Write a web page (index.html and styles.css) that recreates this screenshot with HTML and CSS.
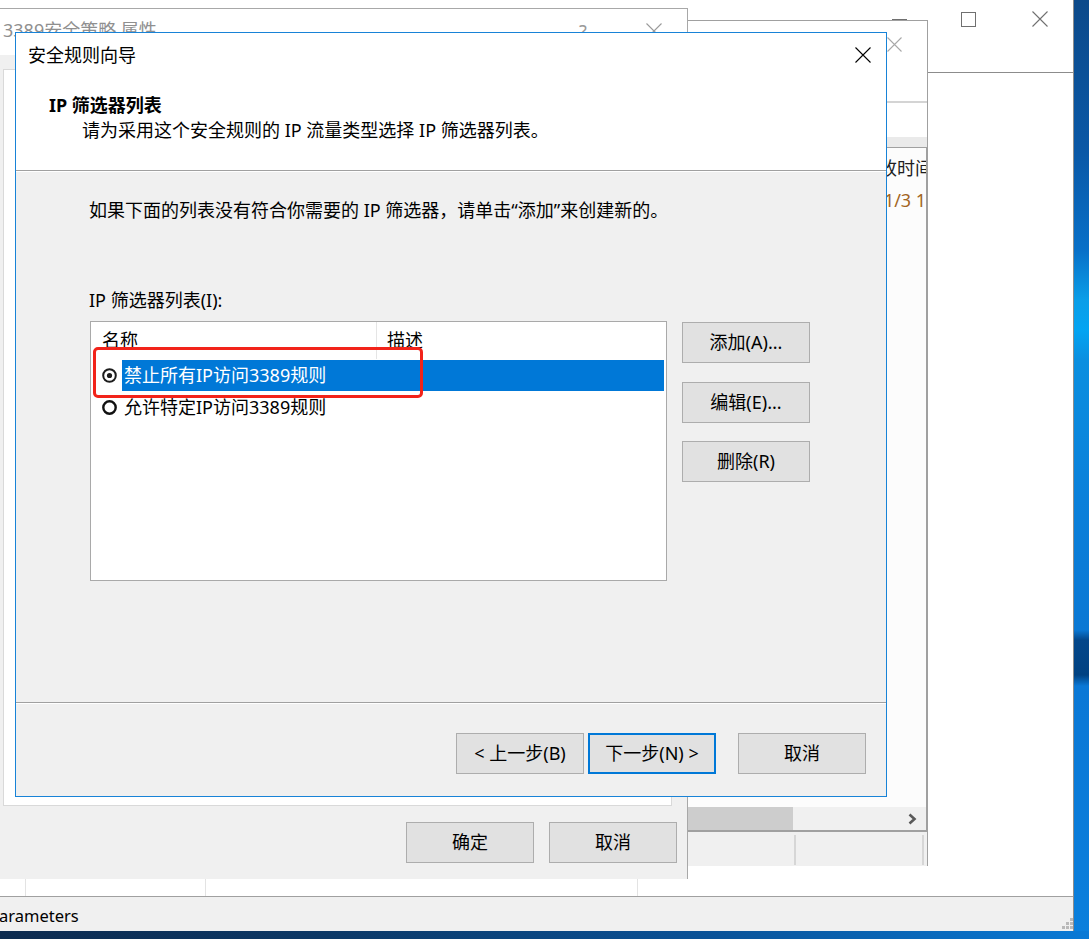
FILE: index.html
```html
<!DOCTYPE html>
<html lang="zh-CN">
<head>
<meta charset="utf-8">
<title>安全规则向导</title>
<link rel="stylesheet" href="styles.css">
</head>
<body>
<div class="desktop">

  <section class="win win-main">
    <header class="main-titlebar">
      <span class="cap cap-min"><svg width="15" height="1" viewBox="0 0 15 1"><rect width="15" height="1" fill="#707070"/></svg></span>
      <span class="cap cap-max"><svg width="15" height="15" viewBox="0 0 15 15"><rect x="0.5" y="0.5" width="14" height="14" fill="none" stroke="#707070"/></svg></span>
      <span class="cap cap-close"><svg width="16" height="16" viewBox="0 0 16 16"><path d="M0.5 0.5L15.5 15.5M15.5 0.5L0.5 15.5" stroke="#707070" stroke-width="1.1" fill="none"/></svg></span>
    </header>
    <div class="main-list">
      <div class="main-col c1"></div>
      <div class="main-col c2"></div>
      <div class="main-col c3"></div>
      <div class="main-col c4"></div>
    </div>
    <footer class="main-status">
      <span class="status-text">arameters</span>
      <svg class="grip" width="11" height="11" viewBox="0 0 11 11" fill="#b9b9b9"><rect x="8" y="0" width="3" height="3"/><rect x="4" y="4" width="3" height="3"/><rect x="8" y="4" width="3" height="3"/><rect x="0" y="8" width="3" height="3"/><rect x="4" y="8" width="3" height="3"/><rect x="8" y="8" width="3" height="3"/></svg>
    </footer>
  </section>

  <section class="win win-mid">
    <header class="mid-titlebar">
      <span class="cap cap-close"><svg width="15" height="15" viewBox="0 0 15 15"><path d="M0.5 0.5L14.5 14.5M14.5 0.5L0.5 14.5" stroke="#a8a8a8" stroke-width="1.1" fill="none"/></svg></span>
    </header>
    <div class="mid-toolbar"></div>
    <div class="mid-band"></div>
    <div class="mid-list">
      <div class="mid-head"><span></span><span class="mid-cell">上次修改时间</span></div>
      <div class="mid-row"><span></span><span class="mid-cell date">2021/1/3 10:25:36</span></div>
      <div class="hscroll">
        <span class="hthumb"></span>
        <span class="harrow"><svg width="10" height="12" viewBox="0 0 10 12"><path d="M2.5 1.5L7.5 6L2.5 10.5" stroke="#5a5a5a" stroke-width="2.6" fill="none"/></svg></span>
      </div>
    </div>
    <footer class="mid-status">
      <span class="panel p1"></span>
      <span class="panel p2"></span>
    </footer>
  </section>

  <section class="win win-props">
    <header class="props-titlebar">
      <span class="props-title">3389安全策略 属性</span>
      <span class="cap cap-help">?</span>
      <span class="cap cap-close"><svg width="16" height="16" viewBox="0 0 16 16"><path d="M0.5 0.5L15.5 15.5M15.5 0.5L0.5 15.5" stroke="#9a9a9a" stroke-width="1.1" fill="none"/></svg></span>
    </header>
    <div class="props-body">
      <div class="props-panel"></div>
      <div class="props-buttons">
        <button class="btn">确定</button>
        <button class="btn">取消</button>
      </div>
    </div>
  </section>

  <section class="win win-wiz">
    <header class="wiz-titlebar">
      <span class="wiz-title">安全规则向导</span>
      <span class="cap wiz-close"><svg width="16" height="16" viewBox="0 0 16 16"><path d="M0.5 0.5L15.5 15.5M15.5 0.5L0.5 15.5" stroke="#000" stroke-width="1.1" fill="none"/></svg></span>
    </header>
    <div class="wiz-header">
      <div class="wiz-heading">IP 筛选器列表</div>
      <div class="wiz-sub">请为采用这个安全规则的 IP 流量类型选择 IP 筛选器列表。</div>
    </div>
    <div class="wiz-body">
      <p class="wiz-text">如果下面的列表没有符合你需要的 IP 筛选器，请单击“添加”来创建新的。</p>
      <div class="wiz-label">IP 筛选器列表(I):</div>
      <div class="wiz-listrow">
        <div class="listbox">
          <div class="lb-head"><span class="lb-col name">名称</span><span class="lb-col desc">描述</span></div>
          <div class="lb-row">
            <svg class="radio" width="15" height="15" viewBox="0 0 15 15"><circle cx="7.5" cy="7.5" r="6.3" fill="none" stroke="#1c1c1c" stroke-width="2"/><circle cx="7.5" cy="7.5" r="2.6" fill="#1c1c1c"/></svg>
            <span class="lb-text selected">禁止所有IP访问3389规则</span>
          </div>
          <div class="lb-row">
            <svg class="radio" width="15" height="15" viewBox="0 0 15 15"><circle cx="7.5" cy="7.5" r="6.2" fill="none" stroke="#111" stroke-width="2.4"/></svg>
            <span class="lb-text">允许特定IP访问3389规则</span>
          </div>
          <div class="annot"></div>
        </div>
        <div class="side-buttons">
          <button class="btn">添加(A)...</button>
          <button class="btn">编辑(E)...</button>
          <button class="btn">删除(R)</button>
        </div>
      </div>
    </div>
    <footer class="wiz-footer">
      <button class="btn btn-back">&lt; 上一步(B)</button>
      <button class="btn btn-default">下一步(N) &gt;</button>
      <button class="btn">取消</button>
    </footer>
  </section>

  <div class="taskbar"></div>
</div>
</body>
</html>
```

FILE: styles.css
```css
* { box-sizing: border-box; }
html, body { margin: 0; padding: 0; }
body {
  font-family: "Noto Sans", "Noto Sans CJK SC", sans-serif;
  font-size: 18px;
  line-height: 25px;
  color: #000;
  background: #0a78d6;
}
.desktop {
  position: relative;
  width: 1089px;
  height: 939px;
  overflow: hidden;
  background: linear-gradient(180deg, #0c4a8a 0px, #0a58a6 150px, #0870c8 250px, #0a9ee8 300px, #03a4f2 330px, #0a8fe0 360px, #0a80da 500px, #0a78d4 630px, #04478a 640px, #004282 675px, #0a78d6 686px, #0a7fdc 939px);
}
.win { position: absolute; display: flex; flex-direction: column; }
.cap { display: flex; align-items: center; justify-content: center; flex: none; }

/* background main window */
.win-main {
  left: 0; top: 0; width: 1074px; height: 931px;
  background: #fff;
  border-right: 1px solid #8c8c8c;
}
.main-titlebar {
  height: 73px;
  border-bottom: 1px solid #8c8c8c;
  display: flex;
  justify-content: flex-end;
  align-items: flex-start;
}
.main-titlebar .cap { height: 38px; }
.cap-min { width: 60px; }
.cap-max { width: 78px; }
.main-titlebar .cap-close { width: 66px; }
.main-list { flex: 1; display: flex; }
.main-col { border-right: 1px solid #e3e3e3; }
.main-col.c1 { width: 26px; }
.main-col.c2 { width: 180px; }
.main-col.c3 { width: 432px; }
.main-col.c4 { flex: 1; border-right: 0; }
.main-status {
  height: 35px;
  border-top: 1px solid #a0a0a0;
  background: #f0f0f0;
  display: flex;
  justify-content: space-between;
  align-items: center;
}
.status-text {
  font-size: 16.5px;
  margin-left: -1px;
  padding-top: 2px;
}
.grip { align-self: flex-end; margin-bottom: 2px; }

/* middle window */
.win-mid {
  left: 420px; top: 20px; width: 508px; height: 846px;
  background: #fff;
  border-top: 1px solid #a0a0a0;
  border-right: 1px solid #a0a0a0;
}
.mid-titlebar {
  height: 82px;
  border-bottom: 2px solid #d4d4d4;
  display: flex;
  justify-content: flex-end;
  align-items: flex-start;
}
.mid-titlebar .cap-close { width: 66px; height: 46px; }
.mid-toolbar { height: 34px; }
.mid-band { height: 10px; background: #eaeaea; }
.mid-list {
  height: 684px;
  display: flex;
  flex-direction: column;
  overflow: hidden;
  border-top: 1px solid #a0a0a0;
  border-right: 1px solid #a0a0a0;
  border-bottom: 1px solid #a0a0a0;
  background: #fcfcfc;
}
.mid-head, .mid-row {
  display: grid;
  grid-template-columns: 405px 1fr;
  white-space: nowrap;
  overflow: hidden;
  flex: none;
}
.mid-head { height: 40px; padding-top: 8px; color: #1e1e1e; }
.mid-row { height: 26px; }
.mid-cell.date { padding-left: 11px; color: #a3661f; }
.hscroll {
  margin-top: auto;
  height: 23px;
  flex: none;
  display: flex;
  background: #f0f0f0;
}
.hthumb { margin-left: 20px; width: 353px; background: #cdcdcd; }
.harrow { margin-left: auto; width: 28px; display: flex; align-items: center; justify-content: center; }
.mid-status {
  flex: 1;
  display: flex;
  padding-top: 3px;
  padding-bottom: 1px;
  background: #f0f0f0;
  border-top: 1px solid #a0a0a0;
}
.panel { border-right: 2px solid #d6d6d6; }
.panel.p1 { width: 376px; }
.panel.p2 { width: 128px; }

/* properties window */
.win-props {
  left: 0; top: 8px; width: 688px; height: 871px;
  background: #f0f0f0;
  border-top: 1px solid #a8a8a8;
  border-right: 1px solid #a8a8a8;
}
.props-titlebar {
  height: 46px;
  background: #fff;
  display: flex;
  align-items: flex-start;
}
.props-title { flex: 1; color: #8f8f8f; padding: 9px 0 0 3px; white-space: nowrap; }
.props-titlebar .cap { height: 44px; color: #9a9a9a; }
.cap-help { width: 76px; }
.props-titlebar .cap-close { width: 66px; }
.props-body {
  flex: 1;
  display: flex;
  flex-direction: column;
  padding: 14px 10px 15px 3px;
}
.props-panel {
  height: 737px;
  margin-right: 5px;
  background: #fff;
  border: 1px solid #d9d9d9;
}
.props-buttons {
  margin-top: 16px;
  display: flex;
  justify-content: flex-end;
  gap: 15px;
}

/* buttons */
.btn {
  width: 128px;
  height: 41px;
  padding: 0;
  font: inherit;
  color: #000;
  background: #e1e1e1;
  border: 1px solid #adadad;
  border-radius: 0;
  white-space: nowrap;
}
.btn-default { border: 2px solid #0078d7; }

/* wizard */
.win-wiz {
  left: 15px; top: 32px; width: 872px; height: 765px;
  background: #f0f0f0;
  border: 1px solid #1883d7;
}
.wiz-titlebar {
  height: 44px;
  flex: none;
  background: #fff;
  display: flex;
  align-items: center;
  justify-content: space-between;
}
.wiz-title { padding-left: 12px; }
.wiz-close { width: 46px; height: 44px; }
.wiz-header {
  height: 94px;
  flex: none;
  background: #fff;
  padding: 16px 0 0 33px;
  border-bottom: 1px solid #a0a0a0;
}
.wiz-heading { font-weight: 700; }
.wiz-sub { padding-left: 33px; }
.wiz-body {
  height: 531px;
  flex: none;
  border-top: 1px solid #fff;
  padding: 26px 0 0 73px;
}
.wiz-text { margin: 0; }
.wiz-label { margin-top: 65px; }
.wiz-listrow {
  margin: 8px 0 0 1px;
  display: flex;
  align-items: flex-start;
}
.listbox {
  position: relative;
  width: 577px;
  height: 260px;
  background: #fff;
  border: 1px solid #a9a9a9;
}
.lb-head { height: 37px; display: flex; }
.lb-col { display: flex; align-items: center; }
.lb-col.name { width: 286px; padding-left: 11px; border-right: 1px solid #e5e5e5; }
.lb-col.desc { padding-left: 10px; }
.lb-row {
  height: 32px;
  display: flex;
  align-items: center;
  padding-left: 11px;
  white-space: nowrap;
}
.radio { flex: none; }
.lb-text {
  flex: 1;
  height: 31px;
  margin: 0 2px 0 5px;
  padding: 3px 0 0 2px;
}
.lb-text.selected { background: #0078d7; color: #fff; }
.annot {
  position: absolute;
  left: 2px; top: 25px;
  width: 330px; height: 51px;
  border: 3px solid #f2231a;
  border-radius: 5px;
}
.side-buttons {
  margin-left: 15px;
  padding-top: 1px;
  display: flex;
  flex-direction: column;
  gap: 18.5px;
}
.wiz-footer {
  flex: 1;
  border-top: 1px solid #a0a0a0;
  box-shadow: inset 0 1px 0 #fff;
  padding: 30px 20px 0 0;
  display: flex;
  justify-content: flex-end;
  align-items: flex-start;
}
.btn-back { margin-right: 4px; }
.btn-default { margin-right: 22px; }

.taskbar {
  position: absolute;
  left: 0; bottom: 0;
  width: 100%;
  height: 8px;
  background: linear-gradient(90deg, #0d2b4f 0%, #0c3866 30%, #0a5297 65%, #0a7ad6 100%);
}
```
